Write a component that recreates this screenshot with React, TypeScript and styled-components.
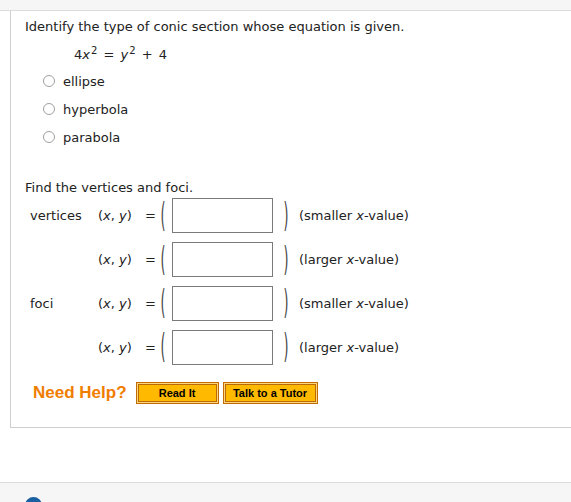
import React from "react";
import styled, { createGlobalStyle } from "styled-components";

const Global = createGlobalStyle`
  html, body { margin: 0; padding: 0; background: #fff; }
  body { font-family: "DejaVu Sans", Verdana, sans-serif; color: #222; }
`;

const TopBar = styled.div`
  height: 10px;
  background: #f6f6f6;
  border-bottom: 1px solid #dcdcdc;
`;

const Panel = styled.div`
  margin-left: 10px;
  height: 417px;
  box-sizing: border-box;
  border-left: 1px solid #cfcfcf;
  border-bottom: 1px solid #cfcfcf;
  padding: 8px 0 0 14px;
  font-size: 13px;
`;

const Prompt = styled.div`
  line-height: 16px;
  height: 16px;
`;

const Equation = styled.div`
  margin: 12px 0 0 49px;
  line-height: 16px;
  height: 16px;
  word-spacing: 2px;
  sup { font-size: 10px; vertical-align: 5px; line-height: 0; margin-left: 1px; }
  i { font-style: italic; }
`;

const Options = styled.div`
  margin-top: 4px;
  margin-left: 18px;
  display: flex;
  flex-direction: column;
`;

const Option = styled.label`
  display: flex;
  align-items: center;
  height: 28px;
  gap: 8px;
`;

const Radio = styled.span`
  width: 12px;
  height: 12px;
  border-radius: 50%;
  border: 1px solid #a0a0a0;
  background: #fff;
  box-sizing: border-box;
`;

const SubPrompt = styled.div`
  margin-top: 29px;
  line-height: 16px;
  height: 16px;
`;

const Rows = styled.div`
  margin-top: -3px;
  display: flex;
  flex-direction: column;
`;

const Row = styled.div`
  display: flex;
  align-items: center;
  height: 44px;
`;

const Label = styled.span`
  width: 68px;
  padding-left: 5px;
`;

const XY = styled.span`
  width: 47px;
  i { font-style: italic; }
`;

const Eq = styled.span`
  width: 14px;
`;

const Paren = styled.span<{ $right?: boolean }>`
  display: inline-block;
  font-family: "DejaVu Sans", sans-serif;
  font-size: 15px;
  color: #444;
  transform: scale(0.85, 2.3);
  width: 8px;
  text-align: center;
  margin: ${(p) => (p.$right ? "0 9px 0 9px" : "0 5px 0 0")};
`;

const Input = styled.span`
  width: 101px;
  height: 35px;
  box-sizing: border-box;
  border: 1px solid #7a7a7a;
  background: #fff;
`;

const Note = styled.span`
  i { font-style: italic; }
`;

const Help = styled.div`
  margin-top: 13px;
  margin-left: 8px;
  display: flex;
  align-items: center;
  height: 22px;
`;

const NeedHelp = styled.span`
  font-family: "Liberation Sans", Arial, sans-serif;
  font-weight: bold;
  font-size: 17px;
  color: #f07d00;
  margin-right: 9px;
`;

const Button = styled.span<{ $w: number }>`
  width: ${(p) => p.$w}px;
  height: 22px;
  box-sizing: border-box;
  border: 1px solid #c26b00;
  background: #ffd680;
  padding: 1px;
  margin-right: 4px;
  display: flex;
`;

const ButtonInner = styled.span`
  flex: 1;
  border: 1px solid #b86a08;
  background: #ffba00;
  font-family: "Liberation Sans", Arial, sans-serif;
  font-weight: bold;
  font-size: 11px;
  color: #000;
  display: flex;
  align-items: center;
  justify-content: center;
`;

const Footer = styled.div`
  margin-top: 54px;
  height: 19px;
  background: #f6f6f6;
  border-top: 1px solid #dcdcdc;
  padding-left: 25px;
  overflow: hidden;
`;

const Dot = styled.span`
  display: block;
  margin-top: 14px;
  width: 17px;
  height: 17px;
  border-radius: 50%;
  background: #1a5fa0;
`;

const rows = [
  { label: "vertices", note: "smaller" },
  { label: "", note: "larger" },
  { label: "foci", note: "smaller" },
  { label: "", note: "larger" },
];

export default function App() {
  return (
    <>
      <Global />
      <TopBar />
      <Panel>
        <Prompt>Identify the type of conic section whose equation is given.</Prompt>
        <Equation>
          4<i>x</i>
          <sup>2</sup> = <i>y</i>
          <sup>2</sup> + 4
        </Equation>
        <Options>
          {["ellipse", "hyperbola", "parabola"].map((o) => (
            <Option key={o}>
              <Radio />
              {o}
            </Option>
          ))}
        </Options>
        <SubPrompt>Find the vertices and foci.</SubPrompt>
        <Rows>
          {rows.map((r, i) => (
            <Row key={i}>
              <Label>{r.label}</Label>
              <XY>
                (<i>x</i>, <i>y</i>)
              </XY>
              <Eq>=</Eq>
              <Paren>(</Paren>
              <Input />
              <Paren $right>)</Paren>
              <Note>
                ({r.note} <i>x</i>-value)
              </Note>
            </Row>
          ))}
        </Rows>
        <Help>
          <NeedHelp>Need Help?</NeedHelp>
          <Button $w={83}>
            <ButtonInner>Read It</ButtonInner>
          </Button>
          <Button $w={95}>
            <ButtonInner>Talk to a Tutor</ButtonInner>
          </Button>
        </Help>
      </Panel>
      <Footer>
        <Dot />
      </Footer>
    </>
  );
}
